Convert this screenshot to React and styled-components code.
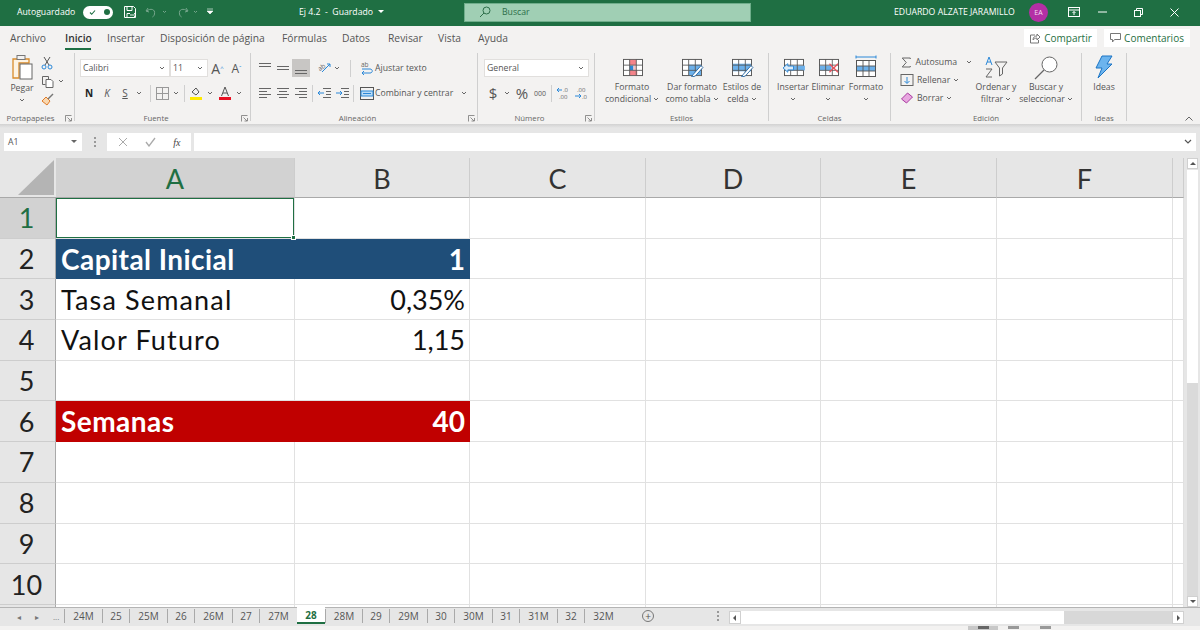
import React from 'react';
import styled, { createGlobalStyle } from 'styled-components';

const GREEN = '#1f6f43';
const BLUE = '#2b88d8';
const UI_FONT = `'Open Sans', 'Noto Sans', sans-serif`;
const CELL_FONT = `Lato, 'Noto Sans', sans-serif`;

const GlobalStyle = createGlobalStyle`
  html, body { margin: 0; padding: 0; background: #e6e6e6; }
  #root { width: 1200px; height: 630px; overflow: hidden; }
`;

// --- SHELL ---
const Page = styled.div`
  width: 1200px;
  height: 630px;
  display: flex;
  flex-direction: column;
  font-family: ${UI_FONT};
  overflow: hidden;
  color: #444;
`;

const TitleBar = styled.header`
  height: 26px;
  flex: none;
  box-sizing: border-box;
  padding-bottom: 2px;
  background: ${GREEN};
  color: #fff;
  display: flex;
  align-items: center;
  font-size: 8.7px;
`;

const TitleSlot = styled.div`
  flex: none;
  width: ${p => p.$w}px;
  margin-left: ${p => p.$ml || 0}px;
  display: flex;
  align-items: center;
  gap: ${p => p.$gap || 0}px;
  white-space: nowrap;
`;

const Toggle = styled.span`
  width: 30px;
  height: 13px;
  border-radius: 7px;
  background: #fff;
  display: flex;
  align-items: center;
  justify-content: space-between;
  padding: 0 3px 0 6px;
  box-sizing: border-box;
  &::after {
    content: '';
    width: 6px;
    height: 6px;
    border-radius: 50%;
    background: ${GREEN};
  }
`;

const UndoIcon = styled.svg`
  margin-left: ${p => p.$ml || 0}px;
  flex: none;
`;

const SearchBox = styled.div`
  width: 287px;
  height: 19px;
  margin-left: 65px;
  flex: none;
  background: #a0cfb4;
  border: 1px solid #6fae8b;
  box-sizing: border-box;
  display: flex;
  align-items: center;
  gap: 11px;
  padding-left: 14px;
  color: #2c6e49;
  font-size: 8.7px;
`;

const Avatar = styled.span`
  width: 19px;
  height: 19px;
  border-radius: 50%;
  background: #b42fa5;
  color: #f3dff0;
  font-size: 7px;
  display: flex;
  align-items: center;
  justify-content: center;
`;

const TabRow = styled.nav`
  height: 26px;
  flex: none;
  background: #f3f2f1;
  display: flex;
  align-items: center;
  padding-left: 10px;
  font-size: 10.3px;
`;

const RibbonTab = styled.span`
  flex: none;
  width: ${p => p.$w}px;
  height: 22px;
  line-height: 20px;
  white-space: nowrap;
  color: ${p => p.$active ? '#333' : '#555'};
  font-weight: ${p => p.$active ? 600 : 400};
  position: relative;
  ${p => p.$active && `
    &::after {
      content: '';
      position: absolute;
      left: 0;
      bottom: 0;
      width: 26px;
      height: 2px;
      background: ${GREEN};
    }
  `}
`;

const ShareButton = styled.button`
  flex: none;
  width: ${p => p.$w}px;
  height: 18px;
  margin-left: ${p => p.$ml || 0}px;
  margin-top: -2px;
  padding: 0 0 0 ${p => p.$pr || 0}px;
  border: 0;
  background: #fff;
  color: ${GREEN};
  font: 10px ${UI_FONT};
  display: flex;
  align-items: center;
  justify-content: center;
  gap: 3px;
`;

// --- RIBBON ---
const Ribbon = styled.section`
  height: 72px;
  flex: none;
  background: #f3f2f1;
  display: flex;
  padding-top: 1px;
  box-sizing: border-box;
  font-size: 8.7px;
  color: #555;
`;

const Group = styled.div`
  flex: none;
  width: ${p => p.$w}px;
  height: 68px;
  box-sizing: border-box;
  border-right: 1px solid #cfcfcf;
  display: flex;
  flex-direction: column;
`;

const GroupBody = styled.div`
  height: 60px;
  flex: none;
  box-sizing: border-box;
  padding-left: ${p => p.$pl || 0}px;
  display: flex;
`;

const GroupLabel = styled.div`
  height: 10px;
  display: grid;
  grid-template-columns: ${p => p.$launch ? '1fr auto 1fr 13px' : '1fr auto 1fr'};
  align-items: center;
  font-size: 7.8px;
  line-height: 10px;
  color: #666;
  white-space: nowrap;
  & > span { grid-column: 2; }
  & > svg { grid-column: 4; justify-self: end; margin-right: 2px; }
`;

const Stack = styled.div`
  display: flex;
  flex-direction: column;
  padding-top: ${p => p.$pt ?? 6}px;
  gap: ${p => p.$gap ?? 7}px;
  margin-left: ${p => p.$ml || 0}px;
  width: ${p => p.$w ? `${p.$w}px` : 'auto'};
  flex: none;
`;

const ToolRow = styled.div`
  height: ${p => p.$h || 18}px;
  display: flex;
  align-items: center;
  white-space: nowrap;
`;

const Tool = styled.span`
  flex: none;
  width: ${p => p.$w || 18}px;
  height: 18px;
  margin-left: ${p => p.$ml || 0}px;
  display: flex;
  align-items: center;
  justify-content: center;
  background: ${p => p.$active ? '#c8c6c4' : 'transparent'};
  font-size: ${p => p.$size || 9}px;
  font-weight: ${p => p.$bold ? 700 : 400};
  font-style: ${p => p.$italic ? 'italic' : 'normal'};
  text-decoration: ${p => p.$under ? 'underline' : 'none'};
  color: ${p => p.$dark ? '#222' : '#555'};
`;

const GrowMark = styled.sup`
  font-size: 6px;
  color: ${BLUE};
`;

const ToolText = styled.span`
  flex: none;
  margin-left: ${p => p.$ml || 0}px;
  width: ${p => p.$w ? `${p.$w}px` : 'auto'};
`;

const ToolSep = styled.i`
  flex: none;
  width: 1px;
  height: 17px;
  margin: 0 ${p => p.$r || 2}px 0 ${p => p.$l || 2}px;
  background: #cfcfcf;
`;

const Select = styled.div`
  flex: none;
  width: ${p => p.$w}px;
  height: 18px;
  box-sizing: border-box;
  background: #fff;
  border: 1px solid #e1dfdd;
  display: flex;
  align-items: center;
  justify-content: space-between;
  padding: 0 4px 0 2px;
  font-size: 8.7px;
  color: #555;
`;

const BigButton = styled.div`
  flex: none;
  width: ${p => p.$w}px;
  margin-left: ${p => p.$ml || 0}px;
  display: flex;
  flex-direction: column;
  align-items: center;
  text-align: center;
  white-space: nowrap;
  line-height: 12px;
`;

const BigIcon = styled.div`
  height: 28px;
  flex: none;
  display: flex;
  align-items: center;
  justify-content: center;
`;

const BigLine = styled.span`
  height: 12px;
  margin-top: ${p => p.$mt || 0}px;
  display: flex;
  align-items: center;
  gap: 2px;
`;

const SmallAction = styled.div`
  height: 18px;
  display: flex;
  align-items: center;
  gap: 3px;
  white-space: nowrap;
  & > svg:first-child { width: 14px; }
`;

const CollapseSlot = styled.div`
  flex: 1;
  display: flex;
  justify-content: flex-end;
  align-items: flex-end;
  padding: 0 7px 3px 0;
`;

const RibbonShadow = styled.div`
  height: 4px;
  flex: none;
  background: linear-gradient(#d2d2d2, #e6e6e6);
`;

// --- FORMULA BAR ---
const FormulaBar = styled.div`
  height: 28px;
  flex: none;
  background: #e6e6e6;
  display: flex;
  align-items: flex-start;
  padding: 5px 4px 0;
  box-sizing: border-box;
`;

const NameBox = styled.div`
  width: 78px;
  height: 18px;
  flex: none;
  background: #fff;
  display: flex;
  align-items: center;
  justify-content: space-between;
  padding: 0 5px 0 4px;
  box-sizing: border-box;
  font-size: 8.7px;
  color: #555;
`;

const FormulaGrip = styled.div`
  width: 25px;
  height: 18px;
  flex: none;
  display: flex;
  align-items: center;
  justify-content: center;
`;

const FormulaTools = styled.div`
  width: 84px;
  height: 18px;
  flex: none;
  background: #fff;
  display: flex;
  align-items: center;
  justify-content: space-around;
  padding: 0 2px;
  box-sizing: border-box;
  font: italic 10px 'Liberation Serif', serif;
  color: #444;
`;

const FormulaInput = styled.div`
  flex: none;
  width: 1002px;
  height: 18px;
  margin-left: 3px;
  background: #fff;
  display: flex;
  align-items: center;
  justify-content: flex-end;
  padding-right: 4px;
  box-sizing: border-box;
`;

// --- SHEET ---
const SheetArea = styled.div`
  height: 451px;
  flex: none;
  display: flex;
  background: #e6e6e6;
`;

const SheetGrid = styled.div`
  width: 1184px;
  height: 449px;
  margin-top: 2px;
  flex: none;
  overflow: hidden;
  display: grid;
  grid-template-columns: 56px 239px 175px 176px 175px 176px 176px 11px;
  grid-template-rows: 40px repeat(11, 40.7px);
  background: #fff;
`;

const Corner = styled.div`
  background: #e6e6e6;
  border-bottom: 1px solid #a9a9a9;
  display: flex;
  align-items: flex-end;
  justify-content: flex-end;
  padding: 0 2px 2px 0;
`;

const ColHead = styled.div`
  background: ${p => p.$selected ? '#d2d2d2' : '#e6e6e6'};
  color: ${p => p.$selected ? GREEN : '#333'};
  border-right: 1px solid #cdcdcd;
  border-bottom: 1px solid #a9a9a9;
  display: flex;
  align-items: center;
  justify-content: center;
  padding-top: 1px;
  box-sizing: border-box;
  font: 27px ${CELL_FONT};
`;

const RowHead = styled.div`
  background: ${p => p.$selected ? '#d2d2d2' : '#e6e6e6'};
  color: ${p => p.$selected ? GREEN : '#222'};
  border-right: 1px solid #a9a9a9;
  border-bottom: 1px solid #cdcdcd;
  display: flex;
  align-items: center;
  justify-content: center;
  padding-right: 2px;
  box-sizing: border-box;
  font: 27px ${CELL_FONT};
`;

const Cell = styled.div`
  box-sizing: border-box;
  border-right: 1px solid ${p => p.$fill ? p.$fill : '#e1e1e1'};
  border-bottom: 1px solid ${p => p.$fill ? p.$fill : '#e1e1e1'};
  background: ${p => p.$fill || '#fff'};
  color: ${p => p.$fill ? '#fff' : '#111'};
  font: ${p => p.$bold ? 700 : 400} ${p => p.$bold ? 28 : 27}px ${CELL_FONT};
  letter-spacing: ${p => p.$right ? 0 : p.$bold ? 0.45 : 1.15}px;
  display: flex;
  align-items: center;
  justify-content: ${p => p.$right ? 'flex-end' : 'flex-start'};
  padding: 0 4px 0 5px;
  white-space: nowrap;
  position: relative;
  ${p => p.$active && `
    box-shadow: inset 0 0 0 1px ${GREEN};
    &::after {
      content: '';
      position: absolute;
      right: -2px;
      bottom: -2px;
      width: 3px;
      height: 3px;
      background: ${GREEN};
      border: 1px solid #fff;
      z-index: 2;
    }
  `}
`;

const VScroll = styled.div`
  width: 16px;
  flex: none;
  display: flex;
  flex-direction: column;
  align-items: center;
  padding: 2px 2px 0 3px;
  box-sizing: border-box;
`;

const VThumb = styled.div`
  width: 11px;
  height: 213px;
  flex: none;
  background: #fff;
  margin-top: 1px;
`;

const VTrack = styled.div`
  width: 11px;
  flex: 1;
  background: #dadada;
`;

const ScrollButton = styled.div`
  width: ${p => p.$w || 11}px;
  height: ${p => p.$h || 11}px;
  flex: none;
  background: #fff;
  border: 1px solid #d0d0d0;
  box-sizing: border-box;
  display: flex;
  align-items: center;
  justify-content: center;
`;

// --- SHEET TABS ---
const TabBar = styled.footer`
  height: 19px;
  flex: none;
  background: #e6e6e6;
  border-top: 1px solid #b4b4b4;
  box-sizing: border-box;
  display: flex;
  align-items: flex-start;
  font-size: 10px;
  color: #555;
`;

const TabNav = styled.div`
  width: 64px;
  height: 16px;
  flex: none;
  display: flex;
  align-items: center;
  padding-left: 17px;
  gap: 14px;
  box-sizing: border-box;
  font-size: 8px;
  color: #777;
`;

const ScrollGrip = styled.div`
  width: 73px;
  height: 16px;
  flex: none;
  display: flex;
  align-items: center;
  padding-left: 63px;
  box-sizing: border-box;
`;

const SheetTab = styled.div`
  flex: none;
  width: ${p => p.$w}px;
  height: ${p => p.$active ? 17 : 14}px;
  margin-top: ${p => p.$active ? -1 : 1}px;
  box-sizing: border-box;
  border-left: ${p => p.$active ? 0 : '1px solid #a9a9a9'};
  display: flex;
  align-items: center;
  justify-content: center;
  background: ${p => p.$active ? '#fff' : 'transparent'};
  color: ${p => p.$active ? GREEN : '#555'};
  font-weight: ${p => p.$active ? 700 : 400};
  border-bottom: ${p => p.$active ? `2px solid ${GREEN}` : 0};
`;

const AddSheet = styled.div`
  flex: none;
  width: 12px;
  height: 12px;
  margin: 2px 0 0 20px;
  border: 1px solid #777;
  border-radius: 50%;
  box-sizing: border-box;
  display: flex;
  align-items: center;
  justify-content: center;
  line-height: 1;
  font-size: 10px;
  color: #555;
`;

const HScroll = styled.div`
  margin-left: 2px;
  width: 455px;
  height: 13px;
  margin-top: 3px;
  flex: none;
  display: flex;
`;

const HThumb = styled.div`
  flex: none;
  width: 323px;
  background: #fff;
`;

const HTrack = styled.div`
  flex: 1;
  background: #d8d8d8;
`;

const StatusBar = styled.div`
  flex: 1;
  background: #f3f2f1;
  display: flex;
  padding-left: 968px;
`;

const ViewButton = styled.div`
  flex: none;
  width: ${p => p.$active ? 30 : 11}px;
  margin-left: ${p => p.$ml || 0}px;
  background: ${p => p.$active ? '#c8c8c8' : 'transparent'};
  display: flex;
  justify-content: center;
  &::after {
    content: '';
    width: 11px;
    height: 3px;
    background: ${p => p.$active ? '#666' : '#999'};
  }
`;

// --- ICONS ---
const Chev = ({ c = '#666', s = 6 }) => (
  <svg width={s} height={s} viewBox="0 0 6 6"><path d="M1 2l2 2 2-2" fill="none" stroke={c} strokeWidth="1" /></svg>
);

const Launcher = () => (
  <svg width="7" height="7" viewBox="0 0 7 7" fill="none" stroke="#777" strokeWidth=".8">
    <path d="M.5 6.5v-6h6M2.5 2.5l3.5 3.5M3.5 6h3V3" />
  </svg>
);

const Lines = ({ rows }) => (
  <svg width="14" height="14" viewBox="0 0 14 14" stroke="#666" strokeWidth="1">
    {rows.map(([y, x1, x2]) => <path key={y} d={`M${x1} ${y}.5H${x2}`} />)}
  </svg>
);

const IconSheet = ({ fills = [], extra, w = 23, h = 19 }) => (
  <svg width={w} height={h} viewBox={`0 0 ${w * 24 / 23} 20`} fill="none">
    <rect x="2.5" y="1.5" width="20" height="17" fill="#fff" stroke="#555" />
    {fills.map(([x, y, fw, fh, c], i) => <rect key={i} x={x} y={y} width={fw} height={fh} fill={c} />)}
    <path d="M2.5 7.5h20M2.5 13h20M9 1.5v17M16 1.5v17" stroke="#555" strokeWidth=".9" />
    {extra}
  </svg>
);

const Brush = () => (
  <path d="M22 8l-8 9-2 3 4-1 8-9z" fill="#fff" stroke="#2b6ca8" strokeWidth="1" />
);

const tabs = [
  ['Archivo', 55], ['Inicio', 42, true], ['Insertar', 53], ['Disposición de página', 122],
  ['Fórmulas', 60], ['Datos', 46], ['Revisar', 50], ['Vista', 40], ['Ayuda', 40],
];

const sheetTabs = [
  ['24M', 38], ['25', 27], ['25M', 38], ['26', 27], ['26M', 38], ['27', 27], ['27M', 38],
  ['28', 28, true], ['28M', 37], ['29', 27], ['29M', 38], ['30', 27], ['30M', 38],
  ['31', 27], ['31M', 38], ['32', 27], ['32M', 38],
];

const data = {
  2: [{ text: 'Capital Inicial', fill: '#1f4e79', bold: true }, { text: '1', fill: '#1f4e79', bold: true, right: true }],
  3: [{ text: 'Tasa Semanal' }, { text: '0,35%', right: true }],
  4: [{ text: 'Valor Futuro' }, { text: '1,15', right: true }],
  6: [{ text: 'Semanas', fill: '#c00000', bold: true }, { text: '40', fill: '#c00000', bold: true, right: true }],
};

const COLS = ['A', 'B', 'C', 'D', 'E', 'F', ''];

export default function App() {
  return (
    <Page>
      <GlobalStyle />
      <TitleBar>
        <TitleSlot $w={106} $ml={17} $gap={8}>
          Autoguardado
          <Toggle>
            <svg width="7" height="7" viewBox="0 0 7 7"><path d="M1 3.5l1.7 1.8L6 1.5" fill="none" stroke="#1f6f43" strokeWidth="1.1" /></svg>
          </Toggle>
        </TitleSlot>
        <TitleSlot $w={91} $gap={3}>
          <svg width="14" height="14" viewBox="0 0 14 14" fill="none" stroke="#fff">
            <path d="M1.5 1.5h9l2 2v9h-11zM4 1.5v4h5v-4M4 12.5V8.5h3" />
            <path d="M7 10h6M11 8l2 2-2 2" strokeWidth=".9" />
          </svg>
          <UndoIcon $ml={4} width="28" height="14" viewBox="0 0 28 14" fill="none" stroke="#76a68c">
            <path d="M4 3L2 6l3 1M2.5 6c4-3 9-2 8 3-.3 1.500-1 2.500-2 3" />
            <path d="M19 6l1.500 1.500L22 6" />
          </UndoIcon>
          <UndoIcon width="28" height="14" viewBox="0 0 28 14" fill="none" stroke="#76a68c">
            <path d="M11 3l2 3-3 1M12.500 6c-4-3-9-2-8 3 .3 1.500 1 2.500 2 3" />
            <path d="M19 6l1.500 1.500L22 6" />
          </UndoIcon>
          <svg width="8" height="8" viewBox="0 0 8 8"><path d="M1 1h6M1 3l3 3 3-3z" fill="#fff" stroke="#fff" strokeWidth=".6" /></svg>
        </TitleSlot>
        <TitleSlot $w={100} $ml={85} $gap={5}>
          Ej 4.2 &nbsp;-&nbsp; Guardado
          <svg width="6" height="4" viewBox="0 0 6 4"><path d="M0 0h6L3 3z" fill="#fff" /></svg>
        </TitleSlot>
        <SearchBox>
          <svg width="12" height="12" viewBox="0 0 12 12" fill="none" stroke="#2c6e49">
            <circle cx="7.500" cy="4.500" r="3.500" /><path d="M5 7l-4 4" />
          </svg>
          Buscar
        </SearchBox>
        <TitleSlot $w={127} $ml={143}>EDUARDO ALZATE JARAMILLO</TitleSlot>
        <TitleSlot $w={19} $ml={8}><Avatar>EA</Avatar></TitleSlot>
        <TitleSlot $w={12} $ml={20}>
          <svg width="12" height="10" viewBox="0 0 12 10" fill="none" stroke="#fff"><rect x=".5" y=".5" width="11" height="9" /><path d="M.5 3h11M6 8V4.500M4.500 6L6 4.500 7.500 6" /></svg>
        </TitleSlot>
        <TitleSlot $w={9} $ml={18}>
          <svg width="9" height="2" viewBox="0 0 9 2"><path d="M0 1h9" stroke="#fff" /></svg>
        </TitleSlot>
        <TitleSlot $w={9} $ml={27}>
          <svg width="9" height="9" viewBox="0 0 9 9" fill="none" stroke="#fff"><rect x=".5" y="2.500" width="6" height="6" /><path d="M2.500 2.500v-2h6v6h-2" /></svg>
        </TitleSlot>
        <TitleSlot $w={9} $ml={27}>
          <svg width="9" height="9" viewBox="0 0 9 9" stroke="#fff"><path d="M.5.5l8 8M8.500.5l-8 8" /></svg>
        </TitleSlot>
      </TitleBar>

      <TabRow>
        {tabs.map(([label, w, active]) => <RibbonTab key={label} $w={w} $active={active}>{label}</RibbonTab>)}
        <ShareButton $w={73} $ml={506}>
          <svg width="12" height="11" viewBox="0 0 12 11" fill="none" stroke="#777"><path d="M6 2H1.500v8h8V7M4 7c0-3 2-4 4-4V1l3 3-3 3V5C6 5 5 6 4 7z" /></svg>
          Compartir
        </ShareButton>
        <ShareButton $w={86} $ml={7}>
          <svg width="11" height="10" viewBox="0 0 11 10" fill="none" stroke="#777"><path d="M.5.5h10v6h-6l-2 2.500V6.500h-2z" /></svg>
          Comentarios
        </ShareButton>
      </TabRow>

      <Ribbon>
        <Group $w={75}>
          <GroupBody>
            <BigButton $w={44}>
              <svg width="26" height="28" viewBox="0 0 26 28" fill="none">
                <path d="M4 6h16v4H10v15H4z" fill="#fdf3e3" stroke="#d98c2b" strokeWidth="1.300" />
                <rect x="8" y="2.500" width="8" height="4" fill="#f3f2f1" stroke="#777" />
                <rect x="11" y="11" width="12" height="15" fill="#fff" stroke="#666" />
              </svg>
              <BigLine $mt={1}>Pegar</BigLine>
              <BigLine><Chev /></BigLine>
            </BigButton>
            <Stack $pt={1} $gap={0} $ml={-4}>
              <ToolRow>
                <Tool $w={14}>
                  <svg width="12" height="14" viewBox="0 0 12 14" fill="none" stroke="#555"><path d="M3 1l5 8M9 1L4 9" /><circle cx="3" cy="11" r="2" stroke="#2b88d8" /><circle cx="9" cy="11" r="2" stroke="#2b88d8" /></svg>
                </Tool>
              </ToolRow>
              <ToolRow>
                <Tool $w={14}>
                  <svg width="13" height="13" viewBox="0 0 13 13" fill="none" stroke="#666"><path d="M1.500 1.500h6v3M1.500 1.500v8h3" /><path d="M5 4.500h5l2 2v6H5z" fill="#fff" /></svg>
                </Tool>
                <Tool $w={14}><Chev /></Tool>
              </ToolRow>
              <ToolRow>
                <Tool $w={14}>
                  <svg width="13" height="13" viewBox="0 0 13 13" fill="none"><path d="M1 8l4-4 4 4-3 4z" fill="#f9d8b0" stroke="#e07b28" /><path d="M7 6l5-5" stroke="#777" strokeWidth="1.500" /></svg>
                </Tool>
              </ToolRow>
            </Stack>
          </GroupBody>
          <GroupLabel $launch><span>Portapapeles</span><Launcher /></GroupLabel>
        </Group>

        <Group $w={176}>
          <GroupBody $pl={5}>
            <Stack>
              <ToolRow>
                <Select $w={90}>Calibri<Chev /></Select>
                <Select $w={38}>11<Chev /></Select>
                <Tool $w={19} $size={14}>A<GrowMark>^</GrowMark></Tool>
                <Tool $w={19} $size={12}>A<GrowMark>ˇ</GrowMark></Tool>
              </ToolRow>
              <ToolRow>
                <Tool $bold $dark $size={10}>N</Tool>
                <Tool $italic $size={10}>K</Tool>
                <Tool $under $size={10}>S</Tool>
                <Tool $w={10}><Chev /></Tool>
                <ToolSep $l={6} $r={0} />
                <Tool>
                  <svg width="13" height="13" viewBox="0 0 13 13" fill="none" stroke="#999"><rect x=".5" y=".5" width="12" height="12" /><path d="M6.500 0v13M0 6.500h13" /></svg>
                </Tool>
                <Tool $w={10}><Chev /></Tool>
                <ToolSep $l={3} $r={2} />
                <Tool>
                  <svg width="14" height="14" viewBox="0 0 14 14" fill="none"><path d="M3 6l4-4 3 4-3 3z" stroke="#555" /><rect x="1" y="11" width="12" height="3" fill="#ffea00" /></svg>
                </Tool>
                <Tool $w={10}><Chev /></Tool>
                <Tool $w={1} />
                <Tool>
                  <svg width="14" height="14" viewBox="0 0 14 14" fill="none"><path d="M3.500 10L7 1l3.500 9M5 7h4" stroke="#555" /><rect x="1" y="11" width="12" height="3" fill="#e81123" /></svg>
                </Tool>
                <Tool $w={10}><Chev /></Tool>
              </ToolRow>
            </Stack>
          </GroupBody>
          <GroupLabel $launch><span>Fuente</span><Launcher /></GroupLabel>
        </Group>

        <Group $w={227}>
          <GroupBody $pl={5}>
            <Stack>
              <ToolRow>
                <Tool><Lines rows={[[2, 1, 13], [5, 1, 13]]} /></Tool>
                <Tool><Lines rows={[[5, 1, 13], [8, 1, 13]]} /></Tool>
                <Tool $w={18} $active><Lines rows={[[9, 1, 13], [12, 1, 13]]} /></Tool>
                <Tool $ml={5}>
                  <svg width="16" height="16" viewBox="0 0 16 16" fill="none"><text x="2" y="10" fontSize="6.500" fill="#666" transform="rotate(-35 5 8)">ab</text><path d="M6 12l8-8M11 4h3v3" stroke={BLUE} /></svg>
                </Tool>
                <Tool $w={7}><Chev /></Tool>
                <ToolSep $l={10} $r={9} />
                <Tool $w={14}>
                  <svg width="14" height="14" viewBox="0 0 14 14" fill="none"><text x="1" y="6" fontSize="6.500" fill="#666">ab</text><path d="M3 12h7c3 0 3-4 0-4H2M4 10l-2 2 2 2" stroke={BLUE} /></svg>
                </Tool>
                <ToolText $ml={1}>Ajustar texto</ToolText>
              </ToolRow>
              <ToolRow>
                <Tool><Lines rows={[[2, 1, 13], [5, 1, 9], [8, 1, 13], [11, 1, 9]]} /></Tool>
                <Tool><Lines rows={[[2, 1, 13], [5, 3, 11], [8, 1, 13], [11, 3, 11]]} /></Tool>
                <Tool><Lines rows={[[2, 1, 13], [5, 5, 13], [8, 1, 13], [11, 5, 13]]} /></Tool>
                <ToolSep $l={2} $r={2} />
                <Tool>
                  <svg width="14" height="13" viewBox="0 0 14 13" fill="none"><path d="M6 1.500h8M9 4.500h5M9 7.500h5M6 10.500h8" stroke="#666" /><path d="M7 6H1M3 4L1 6l2 2" stroke={BLUE} /></svg>
                </Tool>
                <Tool>
                  <svg width="14" height="13" viewBox="0 0 14 13" fill="none"><path d="M6 1.500h8M9 4.500h5M9 7.500h5M6 10.500h8" stroke="#666" /><path d="M1 6h6M5 4l2 2-2 2" stroke={BLUE} /></svg>
                </Tool>
                <ToolSep $l={2} $r={6} />
                <Tool $w={14}>
                  <svg width="14" height="13" viewBox="0 0 14 13" fill="none" stroke="#555"><rect x=".5" y=".5" width="13" height="12" /><rect x="1" y="4" width="12" height="5" fill="#bcdcf5" stroke={BLUE} /><path d="M3 6.500h8" stroke={BLUE} /></svg>
                </Tool>
                <ToolText $ml={1} $w={86}>Combinar y centrar</ToolText>
                <Chev />
              </ToolRow>
            </Stack>
          </GroupBody>
          <GroupLabel $launch><span>Alineación</span><Launcher /></GroupLabel>
        </Group>

        <Group $w={117}>
          <GroupBody $pl={6}>
            <Stack>
              <ToolRow><Select $w={105}>General<Chev /></Select></ToolRow>
              <ToolRow>
                <Tool $size={15}>$</Tool>
                <Tool $w={10}><Chev /></Tool>
                <Tool $w={1} />
                <Tool $size={15}>%</Tool>
                <Tool $size={7}>000</Tool>
                <ToolSep $l={2} $r={2} />
                <Tool>
                  <svg width="14" height="14" viewBox="0 0 14 14" fill="none"><text x="7" y="6" fontSize="6" fill="#666">.0</text><text x="3" y="13" fontSize="6" fill="#666">.00</text><path d="M6 4H1M3 2L1 4l2 2" stroke={BLUE} /></svg>
                </Tool>
                <Tool>
                  <svg width="14" height="14" viewBox="0 0 14 14" fill="none"><text x="3" y="6" fontSize="6" fill="#666">.00</text><text x="8" y="13" fontSize="6" fill="#666">.0</text><path d="M1 10h6M5 8l2 2-2 2" stroke={BLUE} /></svg>
                </Tool>
              </ToolRow>
            </Stack>
          </GroupBody>
          <GroupLabel $launch><span>Número</span><Launcher /></GroupLabel>
        </Group>

        <Group $w={174}>
          <GroupBody $pl={8}>
            <BigButton $w={58}>
              <BigIcon>
                <IconSheet fills={[[9, 2, 7, 5.5, '#f4838a'], [9, 8, 4, 5, BLUE], [13, 8, 3, 5, '#f4c2c5'], [9, 13, 8, 5, '#f4838a']]} />
              </BigIcon>
              <BigLine>Formato</BigLine>
              <BigLine>condicional <Chev /></BigLine>
            </BigButton>
            <BigButton $w={56} $ml={3}>
              <BigIcon>
                <IconSheet fills={[[9, 7, 13, 11, '#6cb0ea']]} extra={<Brush />} w={25} />
              </BigIcon>
              <BigLine>Dar formato</BigLine>
              <BigLine>como tabla <Chev /></BigLine>
            </BigButton>
            <BigButton $w={36} $ml={4}>
              <BigIcon>
                <IconSheet fills={[[3, 6, 19, 8, '#6cb0ea']]} extra={<Brush />} w={25} />
              </BigIcon>
              <BigLine>Estilos de</BigLine>
              <BigLine>celda <Chev /></BigLine>
            </BigButton>
          </GroupBody>
          <GroupLabel><span>Estilos</span></GroupLabel>
        </Group>

        <Group $w={122}>
          <GroupBody $pl={6}>
            <BigButton $w={36}>
              <BigIcon>
                <IconSheet fills={[[10, 8, 14, 5, '#6cb0ea']]} extra={<path d="M12 8.500H6V6L1 10.500 6 15v-2.500h6z" fill="#dcecf9" stroke={BLUE} />} />
              </BigIcon>
              <BigLine>Insertar</BigLine>
              <BigLine><Chev /></BigLine>
            </BigButton>
            <BigButton $w={34}>
              <BigIcon>
                <IconSheet fills={[[3, 8, 12, 5, '#6cb0ea']]} extra={<path d="M13 6l9 9M22 6l-9 9" stroke="#e8505b" strokeWidth="1.300" />} />
              </BigIcon>
              <BigLine>Eliminar</BigLine>
              <BigLine><Chev /></BigLine>
            </BigButton>
            <BigButton $w={42}>
              <BigIcon>
                <svg width="24" height="24" viewBox="0 0 24 24" fill="none">
                  <path d="M2 2h20M2 .500v3M22 .500v3" stroke={BLUE} />
                  <rect x="2.500" y="5.500" width="19" height="16" fill="#fff" stroke="#555" />
                  <rect x="3" y="11" width="18" height="5" fill="#6cb0ea" />
                  <path d="M2.500 11h19M2.500 16h19M9 5.500v16M15 5.500v16" stroke="#555" strokeWidth=".9" />
                </svg>
              </BigIcon>
              <BigLine>Formato</BigLine>
              <BigLine><Chev /></BigLine>
            </BigButton>
          </GroupBody>
          <GroupLabel><span>Celdas</span></GroupLabel>
        </Group>

        <Group $w={191}>
          <GroupBody $pl={9}>
            <Stack $pt={0} $gap={0} $w={72}>
              <SmallAction>
                <svg width="11" height="11" viewBox="0 0 11 11" fill="none"><path d="M9.500 2V1h-8l4 4.500-4 4.500h8V9" stroke="#666" /></svg>
                Autosuma<ToolText $ml={6}><Chev /></ToolText>
              </SmallAction>
              <SmallAction>
                <svg width="13" height="12" viewBox="0 0 13 12" fill="none"><rect x=".5" y=".5" width="12" height="11" stroke="#666" /><path d="M6.500 3v6M4 7l2.500 2.500L9 7" stroke={BLUE} /></svg>
                Rellenar <Chev />
              </SmallAction>
              <SmallAction>
                <svg width="13" height="12" viewBox="0 0 13 12" fill="none"><path d="M1 7l6-6 5 4-6 6z" fill="#e8a7e0" stroke="#a93ba0" /></svg>
                Borrar <Chev />
              </SmallAction>
            </Stack>
            <BigButton $w={48}>
              <BigIcon>
                <svg width="24" height="24" viewBox="0 0 24 24" fill="none">
                  <path d="M2 10l3-8 3 8M3 7h4" stroke={BLUE} />
                  <path d="M2 14h6l-6 8h6" stroke="#666" />
                  <path d="M11 7h12l-4.500 6v6l-3 2v-8z" stroke="#666" />
                </svg>
              </BigIcon>
              <BigLine>Ordenar y</BigLine>
              <BigLine>filtrar <Chev /></BigLine>
            </BigButton>
            <BigButton $w={52}>
              <BigIcon>
                <svg width="25" height="25" viewBox="0 0 25 25" fill="none" stroke="#666">
                  <circle cx="15.500" cy="9.500" r="7.500" fill="#fff" /><path d="M10 15L1 24" strokeWidth="1.200" />
                </svg>
              </BigIcon>
              <BigLine>Buscar y</BigLine>
              <BigLine>seleccionar <Chev /></BigLine>
            </BigButton>
          </GroupBody>
          <GroupLabel><span>Edición</span></GroupLabel>
        </Group>

        <Group $w={45}>
          <GroupBody>
            <BigButton $w={44}>
              <BigIcon>
                <svg width="20" height="24" viewBox="0 0 20 24"><path d="M8 1h10l-5 8h5L4 23l4-10H2z" fill="#6cb4ee" stroke="#1b74c4" /></svg>
              </BigIcon>
              <BigLine>Ideas</BigLine>
            </BigButton>
          </GroupBody>
          <GroupLabel><span>Ideas</span></GroupLabel>
        </Group>

        <CollapseSlot>
          <svg width="8" height="5" viewBox="0 0 8 5"><path d="M.5 4.500L4 1l3.500 3.500" fill="none" stroke="#666" /></svg>
        </CollapseSlot>
      </Ribbon>
      <RibbonShadow />

      <FormulaBar>
        <NameBox>A1<svg width="6" height="4" viewBox="0 0 6 4"><path d="M0 0h6L3 3z" fill="#666" /></svg></NameBox>
        <FormulaGrip>
          <svg width="2" height="10" viewBox="0 0 2 10" fill="#999"><rect width="2" height="2" /><rect y="4" width="2" height="2" /><rect y="8" width="2" height="2" /></svg>
        </FormulaGrip>
        <FormulaTools>
          <svg width="10" height="10" viewBox="0 0 10 10" stroke="#aaa"><path d="M1 1l8 8M9 1l-8 8" /></svg>
          <svg width="11" height="10" viewBox="0 0 11 10" fill="none" stroke="#aaa" strokeWidth="1.300"><path d="M1 5l3 4 6-8" /></svg>
          <span>fx</span>
        </FormulaTools>
        <FormulaInput>
          <svg width="8" height="6" viewBox="0 0 8 6" fill="none" stroke="#555" strokeWidth="1.200"><path d="M1 1l3 3 3-3" /></svg>
        </FormulaInput>
      </FormulaBar>

      <SheetArea>
        <SheetGrid>
          <Corner>
            <svg width="36" height="35" viewBox="0 0 36 35"><path d="M36 0v35H0z" fill="#b4b4b4" /></svg>
          </Corner>
          {COLS.map((c, i) => <ColHead key={i} $selected={c === 'A'}>{c}</ColHead>)}
          {Array.from({ length: 11 }, (_, r) => {
            const row = r + 1;
            const cells = data[row] || [];
            return (
              <React.Fragment key={row}>
                <RowHead $selected={row === 1}>{row < 11 ? row : ''}</RowHead>
                {COLS.map((c, i) => {
                  const cell = cells[i] || {};
                  return (
                    <Cell key={i} $fill={cell.fill} $bold={cell.bold} $right={cell.right} $active={row === 1 && i === 0}>
                      {cell.text}
                    </Cell>
                  );
                })}
              </React.Fragment>
            );
          })}
        </SheetGrid>
        <VScroll>
          <ScrollButton>
            <svg width="6" height="4" viewBox="0 0 6 4"><path d="M3 0l3 3H0z" fill="#555" /></svg>
          </ScrollButton>
          <VThumb />
          <VTrack />
          <ScrollButton>
            <svg width="6" height="4" viewBox="0 0 6 4"><path d="M0 0h6L3 3z" fill="#555" /></svg>
          </ScrollButton>
        </VScroll>
      </SheetArea>

      <TabBar>
        <TabNav>
          <span>◂</span><span>▸</span><span>...</span>
        </TabNav>
        {sheetTabs.map(([label, w, active]) => <SheetTab key={label} $w={w} $active={active}>{label}</SheetTab>)}
        <AddSheet>+</AddSheet>
        <ScrollGrip>
          <svg width="2" height="10" viewBox="0 0 2 10" fill="#999"><rect width="2" height="2" /><rect y="4" width="2" height="2" /><rect y="8" width="2" height="2" /></svg>
        </ScrollGrip>
        <HScroll>
          <ScrollButton $w={12} $h={13}>
            <svg width="4" height="6" viewBox="0 0 4 6"><path d="M0 3l3-3v6z" fill="#555" /></svg>
          </ScrollButton>
          <HThumb />
          <HTrack />
          <ScrollButton $w={12} $h={13}>
            <svg width="4" height="6" viewBox="0 0 4 6"><path d="M4 3L1 0v6z" fill="#555" /></svg>
          </ScrollButton>
        </HScroll>
      </TabBar>
      <StatusBar>
        <ViewButton $active />
        <ViewButton $ml={10} />
        <ViewButton $ml={21} />
      </StatusBar>
    </Page>
  );
}
